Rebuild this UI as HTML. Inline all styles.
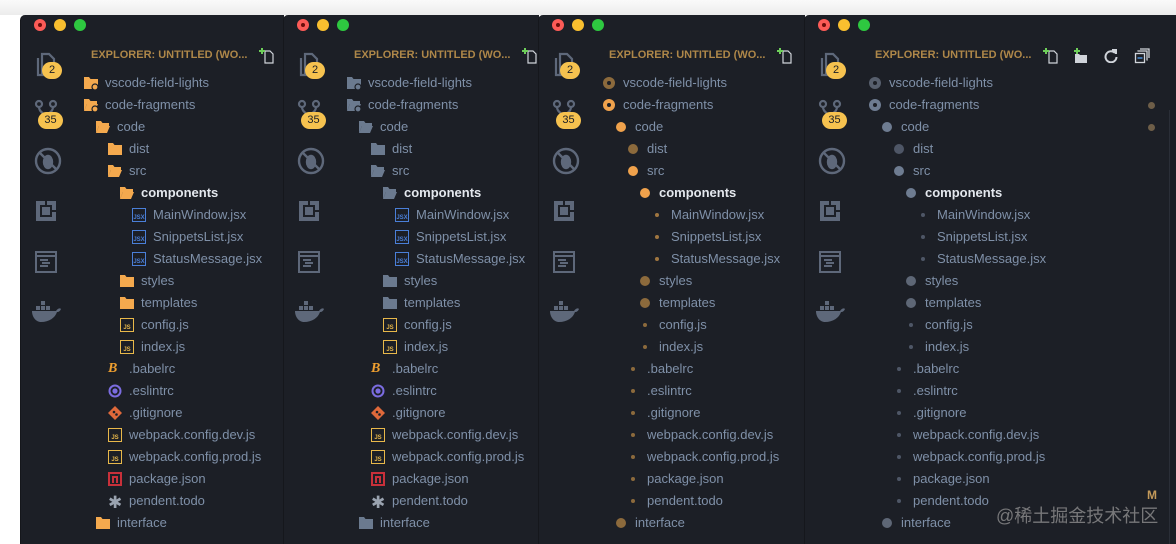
<!DOCTYPE html>
<html><head><meta charset="utf-8"><style>
*{margin:0;padding:0;box-sizing:border-box}
body{width:1176px;height:544px;overflow:hidden;background:#fff;position:relative;font-family:"Liberation Sans","Noto Sans CJK SC",sans-serif}
.top{position:absolute;left:0;top:0;width:1176px;height:15px;background:linear-gradient(#fafafa,#ececec)}
.w{position:absolute;top:15px;height:529px;background:#1c1f26;overflow:hidden;border-left:1px solid #15171c;border-top-left-radius:5px}
.tl{position:absolute;top:4px;width:12px;height:12px;border-radius:50%}
.tl.rd{left:13px;background:#fc5b57}.tl.y{left:33px;background:#f9bf2f}.tl.g{left:53px;background:#2ec840}
.tl.rd:after{content:"";position:absolute;left:4px;top:4px;width:4px;height:4px;border-radius:50%;background:#6b0d0a}
.act{position:absolute;left:0;top:0;width:52px;height:100%}
.ai{position:absolute;left:13px}
.badge{position:absolute;background:#f6c24f;color:#1c1f26;font-size:11px;border-radius:9px;height:17px;line-height:17px;text-align:center}
.hdr{position:absolute;left:70px;top:34px;font-size:11px;font-weight:bold;color:#ae8749;white-space:nowrap}
.tree{position:absolute;left:0;top:57px;width:100%}
.r{position:relative;height:22px;line-height:22px;font-size:13px;color:#7f90a8;white-space:nowrap}
.r b{color:#e4e8ee}
.i{position:absolute;top:4px;width:14px;height:14px}
.l0{padding-left:84px}.l0 .i{left:63px}
.l1{padding-left:96px}.l1 .i{left:75px}
.l2{padding-left:108px}.l2 .i{left:87px}
.l3{padding-left:120px}.l3 .i{left:99px}
.l4{padding-left:132px}.l4 .i{left:111px}
.dot{position:absolute;left:2px;top:2px;width:10px;height:10px;border-radius:50%}
.sm{position:absolute;left:5px;top:5px;width:4px;height:4px;border-radius:50%}
.ring{position:absolute;left:1px;top:1px;width:12px;height:12px;border-radius:50%}
.ring:after{content:"";position:absolute;left:4px;top:4px;width:4px;height:4px;border-radius:50%;background:#1c1f26}
.fx{position:absolute;left:0;top:0;width:14px;height:14px;border:1.3px solid;font-size:6px;line-height:14px;text-align:center;font-weight:bold;padding-top:2px}
.wm{position:absolute;left:996px;top:502px;font-size:18px;color:rgba(150,150,150,.75)}
</style></head><body>
<div class="top"></div>

<!-- WINDOW 1 -->
<div class="w" style="left:20px;width:264px">
<div class="tl rd"></div><div class="tl y"></div><div class="tl g"></div>
<div class="act">
<svg class="ai" style="top:36px" width="26" height="26" viewBox="0 0 26 26" fill="none" stroke="#5e687a" stroke-width="2.2"><path d="M8 3h7l5 5v14H8z"/><path d="M4 7v17h12"/></svg>
<div class="badge" style="left:21px;top:47px;width:20px">2</div>
<svg class="ai" style="top:84px" width="26" height="26" viewBox="0 0 26 26" fill="none" stroke="#5e687a" stroke-width="2.2"><circle cx="5" cy="5" r="3"/><circle cx="19" cy="5" r="3"/><path d="M5 8c0 6 7 6 7 12M19 8c0 6-7 6-7 12"/></svg>
<div class="badge" style="left:17px;top:97px;width:25px">35</div>
<svg class="ai" style="top:132px" width="28" height="28" viewBox="0 0 28 28" fill="none" stroke="#5e687a" stroke-width="2.4"><circle cx="14" cy="14" r="12"/><path d="M5 5l18 18"/><ellipse cx="14" cy="15" rx="4" ry="6" fill="#5e687a"/></svg>
<svg class="ai" style="top:184px" width="24" height="24" viewBox="0 0 24 24" fill="#5e687a"><path d="M2 2h9v4H6v12h12v-5h4v9H2z"/><path d="M13 2h9v9h-4V6h-5z"/><rect x="8" y="8" width="8" height="8"/></svg>
<svg class="ai" style="top:235px" width="24" height="24" viewBox="0 0 24 24" fill="none" stroke="#5e687a" stroke-width="2"><rect x="2" y="2" width="20" height="20"/><path d="M2 6h20M6 10h8M8 13h8M6 16h8"/></svg>
<svg class="ai" style="left:10px;top:286px" width="30" height="22" viewBox="0 0 30 22" fill="#5e687a"><path d="M1 10h24c2-3 4-3 5-2-1 2-2 3-4 3-2 6-8 10-16 10C5 21 1 16 1 10z"/><rect x="5" y="5" width="4" height="4"/><rect x="10" y="5" width="4" height="4"/><rect x="15" y="5" width="4" height="4"/><rect x="10" y="0" width="4" height="4"/></svg>
</div>
<div class="hdr">EXPLORER: UNTITLED (WO...</div>
<svg style="position:absolute;left:238px;top:33px" width="16" height="16" viewBox="0 0 16 16" fill="none"><path d="M6 3h5l3 3v9H6z" stroke="#d0d4da" stroke-width="1.2"/><path d="M3 0v6M0 3h6" stroke="#6ecf5a" stroke-width="2"/></svg>
<div class="tree">
<div class="r l0"><svg class="i" viewBox="0 0 14 14"><path d="M0 1h5l1.5 2H14v10H0z" fill="#f4a94e"/><circle cx="11" cy="11" r="3" fill="#f4a94e" stroke="#1c1f26" stroke-width="1.2"/></svg>vscode-field-lights</div>
<div class="r l0"><svg class="i" viewBox="0 0 14 14"><path d="M0 1h5l1.5 2H13v3H3L0 13z" fill="#f4a94e"/><path d="M3 6h11l-3 7H0z" fill="#f4a94e"/><circle cx="11" cy="11" r="3" fill="#f4a94e" stroke="#1c1f26" stroke-width="1.2"/></svg>code-fragments</div>
<div class="r l1"><svg class="i" viewBox="0 0 14 14"><path d="M0 1h5l1.5 2H13v3H3L0 13z" fill="#f4a94e"/><path d="M3 6h11l-3 7H0z" fill="#f4a94e"/></svg>code</div>
<div class="r l2"><svg class="i" viewBox="0 0 14 14"><path d="M0 1h5l1.5 2H14v10H0z" fill="#f4a94e"/></svg>dist</div>
<div class="r l2"><svg class="i" viewBox="0 0 14 14"><path d="M0 1h5l1.5 2H13v3H3L0 13z" fill="#f4a94e"/><path d="M3 6h11l-3 7H0z" fill="#f4a94e"/></svg>src</div>
<div class="r l3"><svg class="i" viewBox="0 0 14 14"><path d="M0 1h5l1.5 2H13v3H3L0 13z" fill="#f4a94e"/><path d="M3 6h11l-3 7H0z" fill="#f4a94e"/></svg><b>components</b></div>
<div class="r l4"><span class="i"><span class="fx" style="color:#4a7fd8">JSX</span></span>MainWindow.jsx</div>
<div class="r l4"><span class="i"><span class="fx" style="color:#4a7fd8">JSX</span></span>SnippetsList.jsx</div>
<div class="r l4"><span class="i"><span class="fx" style="color:#4a7fd8">JSX</span></span>StatusMessage.jsx</div>
<div class="r l3"><svg class="i" viewBox="0 0 14 14"><path d="M0 1h5l1.5 2H14v10H0z" fill="#f4a94e"/></svg>styles</div>
<div class="r l3"><svg class="i" viewBox="0 0 14 14"><path d="M0 1h5l1.5 2H14v10H0z" fill="#f4a94e"/></svg>templates</div>
<div class="r l3"><span class="i"><span class="fx" style="color:#e8b84a">JS</span></span>config.js</div>
<div class="r l3"><span class="i"><span class="fx" style="color:#e8b84a">JS</span></span>index.js</div>
<div class="r l2"><span class="i" style="color:#f0a030;font:italic bold 14px 'Liberation Serif',serif;line-height:14px">B</span>.babelrc</div>
<div class="r l2"><svg class="i" viewBox="0 0 14 14"><circle cx="7" cy="7" r="5.5" fill="none" stroke="#7b6ce0" stroke-width="2"/><circle cx="7" cy="7" r="2.6" fill="#7b6ce0"/></svg>.eslintrc</div>
<div class="r l2"><svg class="i" viewBox="0 0 14 14"><path d="M7 0l7 7-7 7-7-7z" fill="#e0693a"/><circle cx="6" cy="6" r="1.3" fill="#1c1f26"/><circle cx="8.5" cy="8.5" r="1.3" fill="#1c1f26"/></svg>.gitignore</div>
<div class="r l2"><span class="i"><span class="fx" style="color:#e8b84a">JS</span></span>webpack.config.dev.js</div>
<div class="r l2"><span class="i"><span class="fx" style="color:#e8b84a">JS</span></span>webpack.config.prod.js</div>
<div class="r l2"><svg class="i" viewBox="0 0 14 14"><rect x="1" y="1" width="12" height="12" fill="none" stroke="#c8303a" stroke-width="2"/><path d="M5 11V5h4v6" fill="none" stroke="#c8303a" stroke-width="2"/></svg>package.json</div>
<div class="r l2"><span class="i" style="color:#9aa3b0;font-size:17px;line-height:17px;text-align:center">✱</span>pendent.todo</div>
<div class="r l1"><svg class="i" viewBox="0 0 14 14"><path d="M0 1h5l1.5 2H14v10H0z" fill="#f4a94e"/></svg>interface</div>
</div>
</div>

<!-- WINDOW 2 -->
<div class="w" style="left:283px;width:256px">
<div class="tl rd"></div><div class="tl y"></div><div class="tl g"></div>
<div class="act">
<svg class="ai" style="top:36px" width="26" height="26" viewBox="0 0 26 26" fill="none" stroke="#5e687a" stroke-width="2.2"><path d="M8 3h7l5 5v14H8z"/><path d="M4 7v17h12"/></svg>
<div class="badge" style="left:21px;top:47px;width:20px">2</div>
<svg class="ai" style="top:84px" width="26" height="26" viewBox="0 0 26 26" fill="none" stroke="#5e687a" stroke-width="2.2"><circle cx="5" cy="5" r="3"/><circle cx="19" cy="5" r="3"/><path d="M5 8c0 6 7 6 7 12M19 8c0 6-7 6-7 12"/></svg>
<div class="badge" style="left:17px;top:97px;width:25px">35</div>
<svg class="ai" style="top:132px" width="28" height="28" viewBox="0 0 28 28" fill="none" stroke="#5e687a" stroke-width="2.4"><circle cx="14" cy="14" r="12"/><path d="M5 5l18 18"/><ellipse cx="14" cy="15" rx="4" ry="6" fill="#5e687a"/></svg>
<svg class="ai" style="top:184px" width="24" height="24" viewBox="0 0 24 24" fill="#5e687a"><path d="M2 2h9v4H6v12h12v-5h4v9H2z"/><path d="M13 2h9v9h-4V6h-5z"/><rect x="8" y="8" width="8" height="8"/></svg>
<svg class="ai" style="top:235px" width="24" height="24" viewBox="0 0 24 24" fill="none" stroke="#5e687a" stroke-width="2"><rect x="2" y="2" width="20" height="20"/><path d="M2 6h20M6 10h8M8 13h8M6 16h8"/></svg>
<svg class="ai" style="left:10px;top:286px" width="30" height="22" viewBox="0 0 30 22" fill="#5e687a"><path d="M1 10h24c2-3 4-3 5-2-1 2-2 3-4 3-2 6-8 10-16 10C5 21 1 16 1 10z"/><rect x="5" y="5" width="4" height="4"/><rect x="10" y="5" width="4" height="4"/><rect x="15" y="5" width="4" height="4"/><rect x="10" y="0" width="4" height="4"/></svg>
</div>
<div class="hdr">EXPLORER: UNTITLED (WO...</div>
<svg style="position:absolute;left:238px;top:33px" width="16" height="16" viewBox="0 0 16 16" fill="none"><path d="M6 3h5l3 3v9H6z" stroke="#d0d4da" stroke-width="1.2"/><path d="M3 0v6M0 3h6" stroke="#6ecf5a" stroke-width="2"/></svg>
<div class="tree">
<div class="r l0"><svg class="i" viewBox="0 0 14 14"><path d="M0 1h5l1.5 2H14v10H0z" fill="#6b7a8f"/><circle cx="11" cy="11" r="3" fill="#6b7a8f" stroke="#1c1f26" stroke-width="1.2"/></svg>vscode-field-lights</div>
<div class="r l0"><svg class="i" viewBox="0 0 14 14"><path d="M0 1h5l1.5 2H13v3H3L0 13z" fill="#6b7a8f"/><path d="M3 6h11l-3 7H0z" fill="#6b7a8f"/><circle cx="11" cy="11" r="3" fill="#6b7a8f" stroke="#1c1f26" stroke-width="1.2"/></svg>code-fragments</div>
<div class="r l1"><svg class="i" viewBox="0 0 14 14"><path d="M0 1h5l1.5 2H13v3H3L0 13z" fill="#6b7a8f"/><path d="M3 6h11l-3 7H0z" fill="#6b7a8f"/></svg>code</div>
<div class="r l2"><svg class="i" viewBox="0 0 14 14"><path d="M0 1h5l1.5 2H14v10H0z" fill="#6b7a8f"/></svg>dist</div>
<div class="r l2"><svg class="i" viewBox="0 0 14 14"><path d="M0 1h5l1.5 2H13v3H3L0 13z" fill="#6b7a8f"/><path d="M3 6h11l-3 7H0z" fill="#6b7a8f"/></svg>src</div>
<div class="r l3"><svg class="i" viewBox="0 0 14 14"><path d="M0 1h5l1.5 2H13v3H3L0 13z" fill="#6b7a8f"/><path d="M3 6h11l-3 7H0z" fill="#6b7a8f"/></svg><b>components</b></div>
<div class="r l4"><span class="i"><span class="fx" style="color:#4a7fd8">JSX</span></span>MainWindow.jsx</div>
<div class="r l4"><span class="i"><span class="fx" style="color:#4a7fd8">JSX</span></span>SnippetsList.jsx</div>
<div class="r l4"><span class="i"><span class="fx" style="color:#4a7fd8">JSX</span></span>StatusMessage.jsx</div>
<div class="r l3"><svg class="i" viewBox="0 0 14 14"><path d="M0 1h5l1.5 2H14v10H0z" fill="#6b7a8f"/></svg>styles</div>
<div class="r l3"><svg class="i" viewBox="0 0 14 14"><path d="M0 1h5l1.5 2H14v10H0z" fill="#6b7a8f"/></svg>templates</div>
<div class="r l3"><span class="i"><span class="fx" style="color:#e8b84a">JS</span></span>config.js</div>
<div class="r l3"><span class="i"><span class="fx" style="color:#e8b84a">JS</span></span>index.js</div>
<div class="r l2"><span class="i" style="color:#f0a030;font:italic bold 14px 'Liberation Serif',serif;line-height:14px">B</span>.babelrc</div>
<div class="r l2"><svg class="i" viewBox="0 0 14 14"><circle cx="7" cy="7" r="5.5" fill="none" stroke="#7b6ce0" stroke-width="2"/><circle cx="7" cy="7" r="2.6" fill="#7b6ce0"/></svg>.eslintrc</div>
<div class="r l2"><svg class="i" viewBox="0 0 14 14"><path d="M7 0l7 7-7 7-7-7z" fill="#e0693a"/><circle cx="6" cy="6" r="1.3" fill="#1c1f26"/><circle cx="8.5" cy="8.5" r="1.3" fill="#1c1f26"/></svg>.gitignore</div>
<div class="r l2"><span class="i"><span class="fx" style="color:#e8b84a">JS</span></span>webpack.config.dev.js</div>
<div class="r l2"><span class="i"><span class="fx" style="color:#e8b84a">JS</span></span>webpack.config.prod.js</div>
<div class="r l2"><svg class="i" viewBox="0 0 14 14"><rect x="1" y="1" width="12" height="12" fill="none" stroke="#c8303a" stroke-width="2"/><path d="M5 11V5h4v6" fill="none" stroke="#c8303a" stroke-width="2"/></svg>package.json</div>
<div class="r l2"><span class="i" style="color:#9aa3b0;font-size:17px;line-height:17px;text-align:center">✱</span>pendent.todo</div>
<div class="r l1"><svg class="i" viewBox="0 0 14 14"><path d="M0 1h5l1.5 2H14v10H0z" fill="#6b7a8f"/></svg>interface</div>
</div>
</div>

<!-- WINDOW 3 -->
<div class="w" style="left:538px;width:267px">
<div class="tl rd"></div><div class="tl y"></div><div class="tl g"></div>
<div class="act">
<svg class="ai" style="top:36px" width="26" height="26" viewBox="0 0 26 26" fill="none" stroke="#5e687a" stroke-width="2.2"><path d="M8 3h7l5 5v14H8z"/><path d="M4 7v17h12"/></svg>
<div class="badge" style="left:21px;top:47px;width:20px">2</div>
<svg class="ai" style="top:84px" width="26" height="26" viewBox="0 0 26 26" fill="none" stroke="#5e687a" stroke-width="2.2"><circle cx="5" cy="5" r="3"/><circle cx="19" cy="5" r="3"/><path d="M5 8c0 6 7 6 7 12M19 8c0 6-7 6-7 12"/></svg>
<div class="badge" style="left:17px;top:97px;width:25px">35</div>
<svg class="ai" style="top:132px" width="28" height="28" viewBox="0 0 28 28" fill="none" stroke="#5e687a" stroke-width="2.4"><circle cx="14" cy="14" r="12"/><path d="M5 5l18 18"/><ellipse cx="14" cy="15" rx="4" ry="6" fill="#5e687a"/></svg>
<svg class="ai" style="top:184px" width="24" height="24" viewBox="0 0 24 24" fill="#5e687a"><path d="M2 2h9v4H6v12h12v-5h4v9H2z"/><path d="M13 2h9v9h-4V6h-5z"/><rect x="8" y="8" width="8" height="8"/></svg>
<svg class="ai" style="top:235px" width="24" height="24" viewBox="0 0 24 24" fill="none" stroke="#5e687a" stroke-width="2"><rect x="2" y="2" width="20" height="20"/><path d="M2 6h20M6 10h8M8 13h8M6 16h8"/></svg>
<svg class="ai" style="left:10px;top:286px" width="30" height="22" viewBox="0 0 30 22" fill="#5e687a"><path d="M1 10h24c2-3 4-3 5-2-1 2-2 3-4 3-2 6-8 10-16 10C5 21 1 16 1 10z"/><rect x="5" y="5" width="4" height="4"/><rect x="10" y="5" width="4" height="4"/><rect x="15" y="5" width="4" height="4"/><rect x="10" y="0" width="4" height="4"/></svg>
</div>
<div class="hdr">EXPLORER: UNTITLED (WO...</div>
<svg style="position:absolute;left:238px;top:33px" width="16" height="16" viewBox="0 0 16 16" fill="none"><path d="M6 3h5l3 3v9H6z" stroke="#d0d4da" stroke-width="1.2"/><path d="M3 0v6M0 3h6" stroke="#6ecf5a" stroke-width="2"/></svg>
<div class="tree">
<div class="r l0"><span class="i"><span class="ring" style="background:#8c6a3c"></span></span>vscode-field-lights</div>
<div class="r l0"><span class="i"><span class="ring" style="background:#f0a24c"></span></span>code-fragments</div>
<div class="r l1"><span class="i"><span class="dot" style="background:#f0a24c"></span></span>code</div>
<div class="r l2"><span class="i"><span class="dot" style="background:#8c6a3c"></span></span>dist</div>
<div class="r l2"><span class="i"><span class="dot" style="background:#f0a24c"></span></span>src</div>
<div class="r l3"><span class="i"><span class="dot" style="background:#f0a24c"></span></span><b>components</b></div>
<div class="r l4"><span class="i"><span class="sm" style="background:#a07640"></span></span>MainWindow.jsx</div>
<div class="r l4"><span class="i"><span class="sm" style="background:#a07640"></span></span>SnippetsList.jsx</div>
<div class="r l4"><span class="i"><span class="sm" style="background:#a07640"></span></span>StatusMessage.jsx</div>
<div class="r l3"><span class="i"><span class="dot" style="background:#8c6a3c"></span></span>styles</div>
<div class="r l3"><span class="i"><span class="dot" style="background:#8c6a3c"></span></span>templates</div>
<div class="r l3"><span class="i"><span class="sm" style="background:#8c6a3c"></span></span>config.js</div>
<div class="r l3"><span class="i"><span class="sm" style="background:#8c6a3c"></span></span>index.js</div>
<div class="r l2"><span class="i"><span class="sm" style="background:#8c6a3c"></span></span>.babelrc</div>
<div class="r l2"><span class="i"><span class="sm" style="background:#8c6a3c"></span></span>.eslintrc</div>
<div class="r l2"><span class="i"><span class="sm" style="background:#8c6a3c"></span></span>.gitignore</div>
<div class="r l2"><span class="i"><span class="sm" style="background:#8c6a3c"></span></span>webpack.config.dev.js</div>
<div class="r l2"><span class="i"><span class="sm" style="background:#8c6a3c"></span></span>webpack.config.prod.js</div>
<div class="r l2"><span class="i"><span class="sm" style="background:#8c6a3c"></span></span>package.json</div>
<div class="r l2"><span class="i"><span class="sm" style="background:#8c6a3c"></span></span>pendent.todo</div>
<div class="r l1"><span class="i"><span class="dot" style="background:#8c6a3c"></span></span>interface</div>
</div>
</div>

<!-- WINDOW 4 -->
<div class="w" style="left:804px;width:372px">
<div class="tl rd"></div><div class="tl y"></div><div class="tl g"></div>
<div class="act">
<svg class="ai" style="top:36px" width="26" height="26" viewBox="0 0 26 26" fill="none" stroke="#5e687a" stroke-width="2.2"><path d="M8 3h7l5 5v14H8z"/><path d="M4 7v17h12"/></svg>
<div class="badge" style="left:21px;top:47px;width:20px">2</div>
<svg class="ai" style="top:84px" width="26" height="26" viewBox="0 0 26 26" fill="none" stroke="#5e687a" stroke-width="2.2"><circle cx="5" cy="5" r="3"/><circle cx="19" cy="5" r="3"/><path d="M5 8c0 6 7 6 7 12M19 8c0 6-7 6-7 12"/></svg>
<div class="badge" style="left:17px;top:97px;width:25px">35</div>
<svg class="ai" style="top:132px" width="28" height="28" viewBox="0 0 28 28" fill="none" stroke="#5e687a" stroke-width="2.4"><circle cx="14" cy="14" r="12"/><path d="M5 5l18 18"/><ellipse cx="14" cy="15" rx="4" ry="6" fill="#5e687a"/></svg>
<svg class="ai" style="top:184px" width="24" height="24" viewBox="0 0 24 24" fill="#5e687a"><path d="M2 2h9v4H6v12h12v-5h4v9H2z"/><path d="M13 2h9v9h-4V6h-5z"/><rect x="8" y="8" width="8" height="8"/></svg>
<svg class="ai" style="top:235px" width="24" height="24" viewBox="0 0 24 24" fill="none" stroke="#5e687a" stroke-width="2"><rect x="2" y="2" width="20" height="20"/><path d="M2 6h20M6 10h8M8 13h8M6 16h8"/></svg>
<svg class="ai" style="left:10px;top:286px" width="30" height="22" viewBox="0 0 30 22" fill="#5e687a"><path d="M1 10h24c2-3 4-3 5-2-1 2-2 3-4 3-2 6-8 10-16 10C5 21 1 16 1 10z"/><rect x="5" y="5" width="4" height="4"/><rect x="10" y="5" width="4" height="4"/><rect x="15" y="5" width="4" height="4"/><rect x="10" y="0" width="4" height="4"/></svg>
</div>
<div class="hdr">EXPLORER: UNTITLED (WO...</div>
<svg style="position:absolute;left:238px;top:33px" width="16" height="16" viewBox="0 0 16 16" fill="none"><path d="M6 3h5l3 3v9H6z" stroke="#d0d4da" stroke-width="1.2"/><path d="M3 0v6M0 3h6" stroke="#6ecf5a" stroke-width="2"/></svg>
<svg style="position:absolute;left:268px;top:33px" width="16" height="16" viewBox="0 0 16 16"><path d="M2 6h4l1 1h7v8H2z" fill="#d0d4da"/><path d="M4 0v6M1 3h6" stroke="#6ecf5a" stroke-width="2"/></svg>
<svg style="position:absolute;left:299px;top:34px" width="14" height="14" viewBox="0 0 14 14" fill="none" stroke="#d0d4da" stroke-width="2"><path d="M11 4A5.5 5.5 0 1 0 12.5 8"/><path d="M8 1h4v4" fill="#d0d4da"/></svg>
<svg style="position:absolute;left:329px;top:33px" width="16" height="16" viewBox="0 0 16 16" fill="none" stroke="#d0d4da" stroke-width="1.3"><rect x="1.5" y="5.5" width="9" height="9"/><path d="M4 3.5V3h9v9h-0.5M6 1h9v9"/><path d="M3.5 10h5" stroke="#4a8fd8" stroke-width="1.6"/></svg>
<div style="position:absolute;left:364px;top:95px;width:1px;height:440px;background:#2a2e37"></div>
<div class="tree">
<div class="r l0"><span class="i"><span class="ring" style="background:#575f6d"></span></span>vscode-field-lights</div>
<div class="r l0"><span class="i"><span class="ring" style="background:#6e7c91"></span></span>code-fragments<span style="position:absolute;left:343px;top:8px;width:7px;height:7px;border-radius:50%;background:#6e5e48"></span></div>
<div class="r l1"><span class="i"><span class="dot" style="background:#6e7c91"></span></span>code<span style="position:absolute;left:343px;top:8px;width:7px;height:7px;border-radius:50%;background:#6e5e48"></span></div>
<div class="r l2"><span class="i"><span class="dot" style="background:#4e5666"></span></span>dist</div>
<div class="r l2"><span class="i"><span class="dot" style="background:#6e7c91"></span></span>src</div>
<div class="r l3"><span class="i"><span class="dot" style="background:#6e7c91"></span></span><b>components</b></div>
<div class="r l4"><span class="i"><span class="sm" style="background:#4e5666"></span></span>MainWindow.jsx</div>
<div class="r l4"><span class="i"><span class="sm" style="background:#4e5666"></span></span>SnippetsList.jsx</div>
<div class="r l4"><span class="i"><span class="sm" style="background:#4e5666"></span></span>StatusMessage.jsx</div>
<div class="r l3"><span class="i"><span class="dot" style="background:#5e6776"></span></span>styles</div>
<div class="r l3"><span class="i"><span class="dot" style="background:#5e6776"></span></span>templates</div>
<div class="r l3"><span class="i"><span class="sm" style="background:#4e5666"></span></span>config.js</div>
<div class="r l3"><span class="i"><span class="sm" style="background:#4e5666"></span></span>index.js</div>
<div class="r l2"><span class="i"><span class="sm" style="background:#4e5666"></span></span>.babelrc</div>
<div class="r l2"><span class="i"><span class="sm" style="background:#4e5666"></span></span>.eslintrc</div>
<div class="r l2"><span class="i"><span class="sm" style="background:#4e5666"></span></span>.gitignore</div>
<div class="r l2"><span class="i"><span class="sm" style="background:#4e5666"></span></span>webpack.config.dev.js</div>
<div class="r l2"><span class="i"><span class="sm" style="background:#4e5666"></span></span>webpack.config.prod.js</div>
<div class="r l2"><span class="i"><span class="sm" style="background:#4e5666"></span></span>package.json</div>
<div class="r l2"><span class="i"><span class="sm" style="background:#4e5666"></span></span>pendent.todo<span style="position:absolute;left:342px;top:-6px;font-size:12px;font-weight:bold;color:#c49a5a">M</span></div>
<div class="r l1"><span class="i"><span class="dot" style="background:#5e6776"></span></span>interface</div>
</div>
</div>
<div class="wm">@稀土掘金技术社区</div>
</body></html>
